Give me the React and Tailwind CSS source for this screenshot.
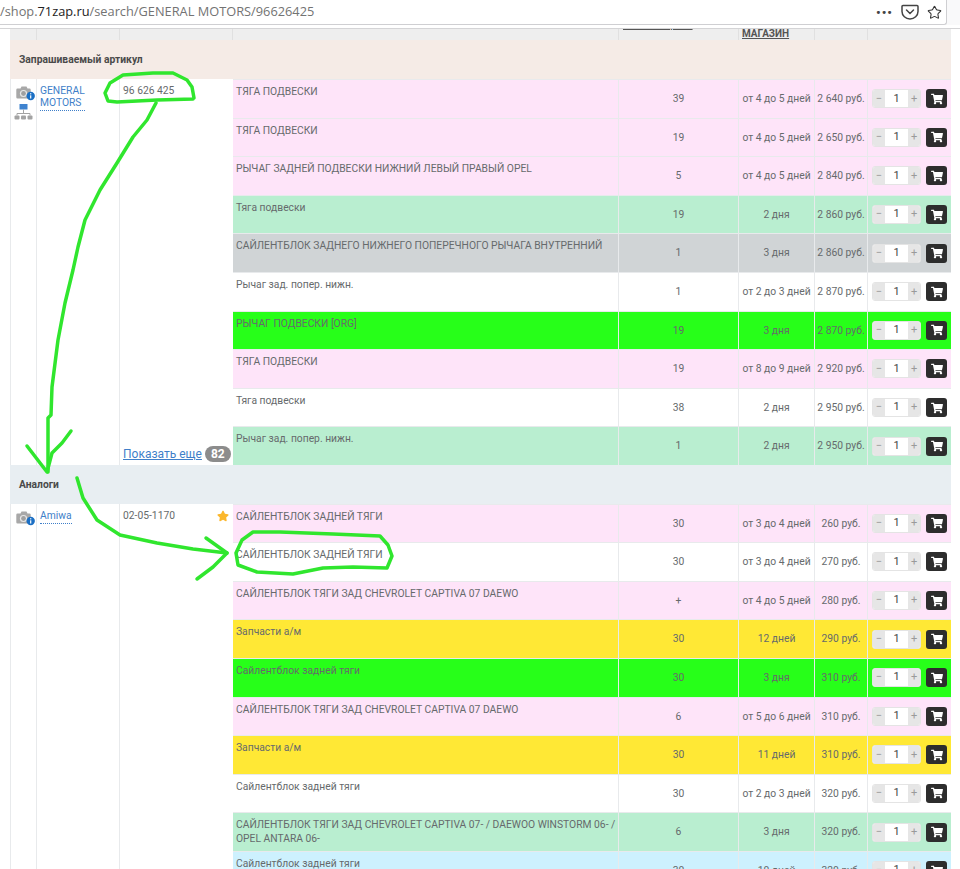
import React from "react";
import { FaShoppingCart, FaStar } from "react-icons/fa";
import { Star } from "lucide-react";

const P = "bg-[#fee4f9]";
const G = "bg-[#b9eed0]";
const S = "bg-[#d0d4d6]";
const W = "bg-white";
const B = "bg-[#27ff19]";
const Y = "bg-[#ffe835]";
const C = "bg-[#cdf1fe]";

const group1 = [
  [P, "ТЯГА ПОДВЕСКИ", "39", "от 4 до 5 дней", "2 640 руб."],
  [P, "ТЯГА ПОДВЕСКИ", "19", "от 4 до 5 дней", "2 650 руб."],
  [P, "РЫЧАГ ЗАДНЕЙ ПОДВЕСКИ НИЖНИЙ ЛЕВЫЙ ПРАВЫЙ OPEL", "5", "от 4 до 5 дней", "2 840 руб."],
  [G, "Тяга подвески", "19", "2 дня", "2 860 руб."],
  [S, "САЙЛЕНТБЛОК ЗАДНЕГО НИЖНЕГО ПОПЕРЕЧНОГО РЫЧАГА ВНУТРЕННИЙ", "1", "3 дня", "2 860 руб."],
  [W, "Рычаг зад. попер. нижн.", "1", "от 2 до 3 дней", "2 870 руб."],
  [B, "РЫЧАГ ПОДВЕСКИ [ORG]", "19", "3 дня", "2 870 руб."],
  [P, "ТЯГА ПОДВЕСКИ", "19", "от 8 до 9 дней", "2 920 руб."],
  [W, "Тяга подвески", "38", "2 дня", "2 950 руб."],
  [G, "Рычаг зад. попер. нижн.", "1", "2 дня", "2 950 руб."],
];

const group2 = [
  [P, "САЙЛЕНТБЛОК ЗАДНЕЙ ТЯГИ", "30", "от 3 до 4 дней", "260 руб."],
  [W, "САЙЛЕНТБЛОК ЗАДНЕЙ ТЯГИ", "30", "от 3 до 4 дней", "270 руб."],
  [P, "САЙЛЕНТБЛОК ТЯГИ ЗАД CHEVROLET CAPTIVA 07 DAEWO", "+", "от 4 до 5 дней", "280 руб."],
  [Y, "Запчасти а/м", "30", "12 дней", "290 руб."],
  [B, "Сайлентблок задней тяги", "30", "3 дня", "310 руб."],
  [P, "САЙЛЕНТБЛОК ТЯГИ ЗАД CHEVROLET CAPTIVA 07 DAEWO", "6", "от 5 до 6 дней", "310 руб."],
  [Y, "Запчасти а/м", "30", "11 дней", "310 руб."],
  [W, "Сайлентблок задней тяги", "30", "от 2 до 3 дней", "320 руб."],
  [G, "САЙЛЕНТБЛОК ТЯГИ ЗАД CHEVROLET CAPTIVA 07- / DAEWOO WINSTORM 06- / OPEL ANTARA 06-", "6", "3 дня", "320 руб."],
  [C, "Сайлентблок задней тяги", "30", "10 дней", "320 руб."],
];

function CameraInfo() {
  return (
    <svg width="19" height="15" viewBox="0 0 19 15" className="block">
      <path d="M1.500 2.500h3l1-2h5l1 2h2a1.200 1.200 0 0 1 1.200 1.200v7.600a1.200 1.200 0 0 1-1.200 1.200h-12a1.200 1.200 0 0 1-1.200-1.200v-7.600a1.200 1.200 0 0 1 1.200-1.200z" fill="#a8a8a8" />
      <circle cx="7.500" cy="7.500" r="3.600" fill="#e8e8e8" />
      <circle cx="7.500" cy="7.500" r="2.400" fill="#a0a0a0" />
      <circle cx="14.700" cy="10" r="4.200" fill="#1b6fc4" />
      <rect x="14.100" y="9.300" width="1.200" height="3.200" fill="#fff" />
      <rect x="14.100" y="7.200" width="1.200" height="1.200" fill="#fff" />
    </svg>
  );
}

function NetworkIcon() {
  return (
    <svg width="19" height="16" viewBox="0 0 19 16" className="block">
      <rect x="5.500" y="0" width="8" height="5.500" fill="#3f83cf" />
      <path d="M9.500 5.500v4M3 11.500v-2h13v2" fill="none" stroke="#a3a3a3" strokeWidth="1" />
      <rect x="0.500" y="11.500" width="5" height="4" rx="1" fill="#a3a3a3" />
      <rect x="7" y="11.500" width="5" height="4" rx="1" fill="#a3a3a3" />
      <rect x="13.500" y="11.500" width="5" height="4" rx="1" fill="#a3a3a3" />
    </svg>
  );
}

function Row({ row }) {
  const [bg, name, qty, days, price] = row;
  return (
    <div className={`flex h-[38.6px] border-t border-[#e8eaec] text-[10.300px] text-[#666a6c] ${bg}`}>
      <div className="w-[386px] border-r border-[#e8eaec] pl-[3px] pt-[5px] leading-[14px]">{name}</div>
      <div className="flex w-[120px] items-center justify-center border-r border-[#e8eaec]">{qty}</div>
      <div className="flex w-[76px] items-center justify-center border-r border-[#e8eaec] whitespace-nowrap">{days}</div>
      <div className="flex w-[53px] items-center justify-center border-r border-[#e8eaec] whitespace-nowrap">{price}</div>
      <div className="flex w-[83px] items-center gap-[5px] pl-[4px]">
        <div className="flex h-[19px] w-[49px] overflow-hidden rounded-[3px] border border-[#e4e4e4] bg-white text-[11px]">
          <span className="flex w-[12px] items-center justify-center bg-[#e6e6e6] text-[#9a9a9a]">−</span>
          <span className="flex flex-1 items-center justify-center text-[#444]">1</span>
          <span className="flex w-[12px] items-center justify-center bg-[#e6e6e6] text-[#9a9a9a]">+</span>
        </div>
        <div className="flex h-[19px] w-[21px] items-center justify-center rounded-[3px] bg-[#2d2d2d] text-white">
          <FaShoppingCart size={12} />
        </div>
      </div>
    </div>
  );
}

function Group({ rows, brand, article, star, network, more }) {
  return (
    <div className="flex">
      <div className="flex w-[27px] shrink-0 flex-col items-start gap-[3px] border-x border-[#e8eaec] bg-white pl-[5px] pt-[7px]">
        <CameraInfo />
        {network && <div className="-ml-[2px]"><NetworkIcon /></div>}
      </div>
      <div className="w-[83px] shrink-0 border-r border-[#e8eaec] bg-white px-[3px] pt-[6px]">
        <span className="block w-min border-b border-dotted border-[#3f7fc9] pb-[1px] text-[10.300px] leading-[12px] text-[#3f7fc9]">{brand}</span>
      </div>
      <div className="flex w-[113px] shrink-0 flex-col justify-between bg-white pb-[3px] pl-[3px] pr-[4px] pt-[5px] text-[10.300px] leading-[14px] text-[#666a6c]">
        <div className="flex items-center justify-between">
          <span>{article}</span>
          {star && <FaStar size={12} className="text-[#fbb72c]" />}
        </div>
        {more && (
          <div className="flex items-center gap-[3px] whitespace-nowrap">
            <span className="text-[12px] text-[#3f7fc9] underline">Показать еще</span>
            <span className="rounded-full bg-[#8c8c8c] px-[6px] text-[12px] font-bold leading-[16px] text-white">{more}</span>
          </div>
        )}
      </div>
      <div className="flex-1">
        {rows.map((r, i) => (
          <Row key={i} row={r} />
        ))}
      </div>
    </div>
  );
}

function Section({ bg, children, h }) {
  return <div className={`flex items-center pl-[9px] text-[10.300px] font-bold text-[#4a4a4a] ${bg} ${h}`}>{children}</div>;
}

function Strokes() {
  const line = (pts) => "M" + pts.map((p) => p.join(" ")).join(" L");
  const paths = [
    [[193, 99], [157, 100], [117, 102], [108, 101], [105, 93], [110, 83], [123, 75], [153, 73], [173, 73], [187, 80], [192, 87], [194, 98]],
    [[156, 103], [147, 120], [133, 137], [117, 163], [100, 190], [85, 220], [78, 247], [73, 270], [65, 303], [58, 340], [52, 387], [51, 415], [48, 418], [48, 472]],
    [[27, 446], [47, 472], [52, 453], [62, 443], [71, 431]],
    [[77, 478], [83, 498], [97, 520], [120, 535], [157, 543], [193, 549], [227, 553]],
    [[206, 538], [227, 553], [213, 567], [197, 579]],
    [[387, 568], [392, 556], [388, 545], [380, 536], [333, 534], [280, 532], [253, 532], [242, 540], [236, 553], [238, 565], [257, 572], [293, 574], [323, 568], [353, 567], [387, 568]],
  ];
  return (
    <svg width="960" height="869" className="pointer-events-none absolute left-0 top-0">
      {paths.map((p, i) => (
        <path key={i} d={line(p)} fill="none" stroke="#30e62e" strokeWidth="3.500" strokeLinecap="round" strokeLinejoin="round" />
      ))}
    </svg>
  );
}

export default function App() {
  return (
    <div className="relative h-[869px] w-[960px] overflow-hidden bg-white font-['Roboto',sans-serif]">
      <div className="bg-[#f9f9fa] pr-[13px]">
        <div className="flex h-[25px] items-center justify-between rounded-br-[3px] border-b border-r border-[#cfcfd2] bg-white pr-[4px]">
          <span className="whitespace-nowrap font-['Open_Sans',sans-serif] text-[12.800px] text-[#737373]">
            /shop.<span className="text-[#222]">71zap.ru</span>/search/GENERAL MOTORS/96626425
          </span>
          <div className="flex items-center gap-[8px]">
            <span className="text-[13px] font-bold leading-none tracking-[1px] text-[#444]">•••</span>
            <svg width="18" height="16" viewBox="0 0 18 16" className="block">
              <path d="M2 1.500h14a1 1 0 0 1 1 1v5a8 7.500 0 0 1-16 0v-5a1 1 0 0 1 1-1z" fill="none" stroke="#444" strokeWidth="1.500" />
              <path d="M5.500 6l3.500 3.500 3.500-3.500" fill="none" stroke="#444" strokeWidth="1.500" strokeLinecap="round" />
            </svg>
            <Star size={15} className="text-[#333]" strokeWidth={1.7} />
          </div>
        </div>
      </div>
      <div className="h-[4px] border-b border-[#d4d4d6] bg-white" />
      <div className="ml-[10px] mr-[9px]">
        <div className="flex h-[11px] overflow-hidden bg-[#eeeeee] text-[10px] font-bold text-[#555]">
          <div className="h-full w-[27px] border-r border-[#e0e0e0]" />
          <div className="h-full w-[83px] border-r border-[#e0e0e0]" />
          <div className="h-full w-[113px] border-r border-[#e0e0e0]" />
          <div className="h-full w-[386px] border-r border-[#e0e0e0]" />
          <div className="flex h-full w-[120px] items-end justify-start border-r border-[#e0e0e0] pb-[9px] pl-[4px] leading-[12px] underline">ПОСТАВЩИКА</div>
          <div className="flex h-full w-[76px] items-end justify-start border-r border-[#e0e0e0] pl-[3px] leading-[12px] underline">МАГАЗИН</div>
          <div className="h-full w-[53px] border-r border-[#e0e0e0]" />
        </div>
        <Section bg="bg-[#f5ebe6]" h="h-[39px]">Запрашиваемый артикул</Section>
        <Group rows={group1} brand="GENERAL MOTORS" article="96 626 425" network more="82" />
        <Section bg="bg-[#e8eef2]" h="h-[38.600px]">Аналоги</Section>
        <Group rows={group2} brand="Amiwa" article="02-05-1170" star />
      </div>
      <Strokes />
    </div>
  );
}
